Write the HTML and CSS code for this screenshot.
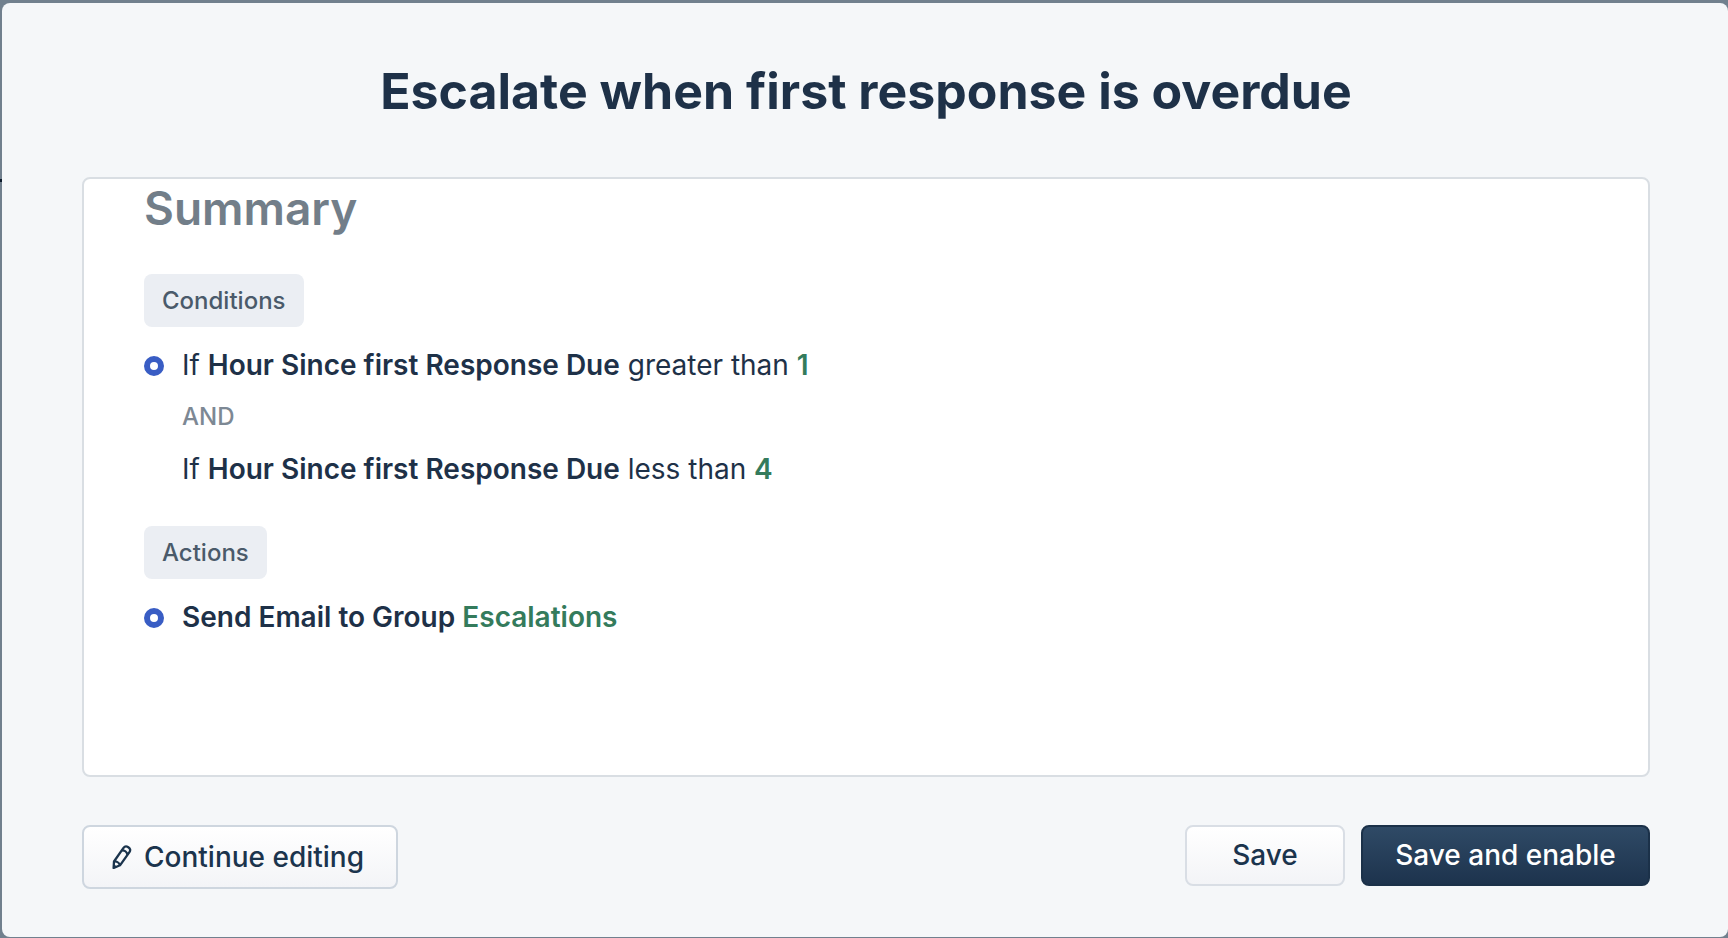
FILE: index.html
```html
<!DOCTYPE html>
<html lang="en">
<head>
<meta charset="utf-8">
<title>Escalate when first response is overdue</title>
<link rel="stylesheet" href="styles.css">
</head>
<body>
<main class="dialog" role="dialog" aria-labelledby="dialog-title">
  <h1 class="dialog-title" id="dialog-title">Escalate when first response is overdue</h1>
  <section class="panel">
    <h2 class="panel-title">Summary</h2>
    <section class="group">
      <h3 class="tag">Conditions</h3>
      <div class="rule">
        <span class="bullet"></span>
        <div class="lines">
          <p class="line">If <strong>Hour Since first Response Due</strong> greater than <b class="value">1</b></p>
          <p class="line operator">AND</p>
          <p class="line">If <strong>Hour Since first Response Due</strong> less than <b class="value">4</b></p>
        </div>
      </div>
    </section>
    <section class="group">
      <h3 class="tag">Actions</h3>
      <div class="rule">
        <span class="bullet"></span>
        <div class="lines">
          <p class="line"><strong>Send Email to Group <span class="value">Escalations</span></strong></p>
        </div>
      </div>
    </section>
  </section>
  <footer class="footer">
    <button type="button" class="button button-edit">
      <svg class="icon" viewBox="0 0 20 24" fill="none" stroke="currentColor" stroke-width="2.300" stroke-linejoin="round" aria-hidden="true">
        <path d="M2 16.500 11.500 2.900C12.600 1.300 14.400 .9 16.300 2.200S18.700 5.200 17.600 6.800L8 20.300 1.600 23Z"/>
        <path d="M9.800 5.400C12.300 5.200 14.900 7 15.500 9.700M2 16.500C4.700 16.200 7.300 17.800 8 20.300"/>
        <path d="M1.600 23 2 19.800 4.400 21.700Z" fill="currentColor" stroke-width="1"/>
      </svg>
      Continue editing
    </button>
    <div class="actions">
      <button type="button" class="button button-save">Save</button>
      <button type="button" class="button button-primary">Save and enable</button>
    </div>
  </footer>
</main>
</body>
</html>
```
FILE: styles.css
```css
* {
  box-sizing: border-box;
}

body {
  margin: 0;
  min-height: 100vh;
  display: flex;
  padding: 3px 0 1px 2px;
  background: linear-gradient(#0c1a2b, #0c1a2b) 0 179px / 2px 3px no-repeat, #71808e;
  color: #1e3148;
  font-family: Inter, "Liberation Sans", sans-serif;
  font-size: 28px;
  line-height: 52px;
}

h1, h2, h3, p {
  margin: 0;
}

.dialog {
  flex: 1;
  display: flex;
  flex-direction: column;
  padding: 56px 78px 48px 80px;
  border-radius: 8px;
  background: #f5f7f9;
}

.dialog-title {
  margin-bottom: 54px;
  font-size: 50px;
  font-weight: 700;
  line-height: 64px;
  text-align: center;
}

.panel {
  flex: 1;
  padding: 0 60px;
  border: 2px solid #d9dee3;
  border-radius: 8px;
  background: #fff;
}

.panel-title {
  margin-bottom: 37px;
  color: #727e89;
  font-size: 46px;
  font-weight: 600;
  line-height: 58px;
}

.group {
  margin-bottom: 31px;
}

.tag {
  width: fit-content;
  margin-bottom: 12px;
  padding: 0 18px;
  border-radius: 8px;
  background: #ebeef3;
  color: #4a5a6a;
  font-size: 24px;
  font-weight: 500;
  line-height: 53px;
}

.rule {
  display: flex;
  gap: 18px;
}

.bullet {
  width: 20px;
  height: 20px;
  margin-top: 17px;
  border: 6px solid #395dc4;
  border-radius: 50%;
}

.line strong {
  font-weight: 600;
}

.operator {
  color: #7d8894;
  font-size: 24px;
  font-weight: 500;
}

.value {
  color: #347b5c;
  font-weight: 600;
}

.footer {
  display: flex;
  justify-content: space-between;
  align-items: flex-start;
  margin-top: 48px;
}

.actions {
  display: flex;
  gap: 16px;
}

.button {
  height: 61px;
  padding: 0 28px 2px;
  border: 2px solid #d9dee5;
  border-radius: 8px;
  background: linear-gradient(#fff, #f3f4f7);
  color: #1b344d;
  font: 500 28px/36px Inter, "Liberation Sans", sans-serif;
  white-space: nowrap;
}

.button-edit {
  display: flex;
  align-items: center;
  gap: 12px;
  height: 64px;
  min-width: 316px;
  padding: 0 28px;
  border-color: #ced6df;
}

.button-save {
  min-width: 160px;
}

.button-primary {
  min-width: 289px;
  border-color: #1b3149;
  background: linear-gradient(#2f4a66, #1d334d);
  color: #fff;
}

.icon {
  width: 20px;
  height: 24px;
}
```
